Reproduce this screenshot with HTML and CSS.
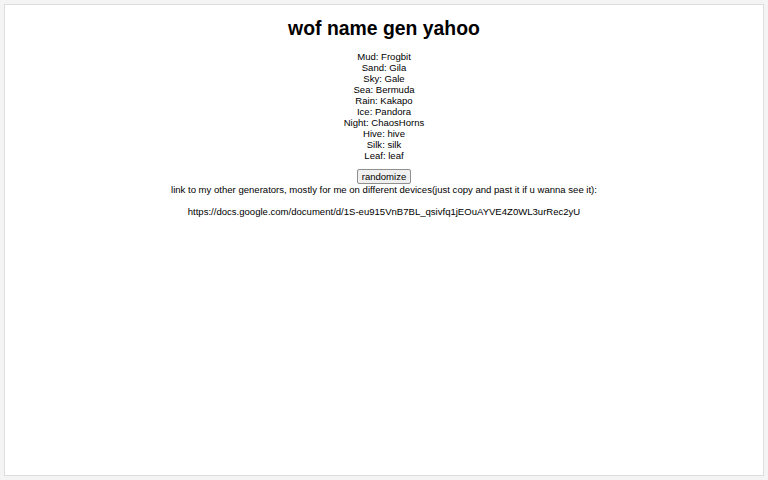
FILE: index.html
```html
<!DOCTYPE html>
<html>
<head>
<meta charset="utf-8">
<title>wof name gen yahoo</title>
<link rel="stylesheet" href="styles.css">
</head>
<body>
<div class="frame">
  <h1 class="title">wof name gen yahoo</h1>
  <div class="names">
    <div>Mud: Frogbit</div>
    <div>Sand: Gila</div>
    <div>Sky: Gale</div>
    <div>Sea: Bermuda</div>
    <div>Rain: Kakapo</div>
    <div>Ice: Pandora</div>
    <div>Night: ChaosHorns</div>
    <div>Hive: hive</div>
    <div>Silk: silk</div>
    <div>Leaf: leaf</div>
  </div>
  <button class="btn" type="button">randomize</button>
  <p class="note">link to my other generators, mostly for me on different devices(just copy and past it if u wanna see it):</p>
  <p class="link">https://docs.google.com/document/d/1S-eu915VnB7BL_qsivfq1jEOuAYVE4Z0WL3urRec2yU</p>
</div>
</body>
</html>
```
FILE: styles.css
```css
html, body {
  margin: 0;
  height: 100%;
}
body {
  background: #f4f4f4;
  padding: 4px;
  box-sizing: border-box;
  font-family: "Liberation Sans", Arial, sans-serif;
  font-size: 9.55px;
  color: #000;
}
.frame {
  background: #fff;
  border: 1px solid #dedede;
  height: 100%;
  box-sizing: border-box;
  text-align: center;
  padding-top: 14px;
}
.title {
  font-size: 19.4px;
  font-weight: bold;
  margin: 0 0 14px;
  line-height: 18px;
}
.names {
  line-height: 11px;
}
.btn {
  font-family: "Liberation Sans", Arial, sans-serif;
  font-size: 9.55px;
  margin-top: 8px;
  padding: 1px 4px;
  line-height: 11px;
  height: 15px;
  background: #f0f0f0;
  border: 1px solid #8f8f8f;
  border-radius: 2px;
  color: #000;
  vertical-align: top;
}
.note {
  margin: 0;
  line-height: 11px;
}
.link {
  margin: 11px 0 0;
  line-height: 11px;
}
```
